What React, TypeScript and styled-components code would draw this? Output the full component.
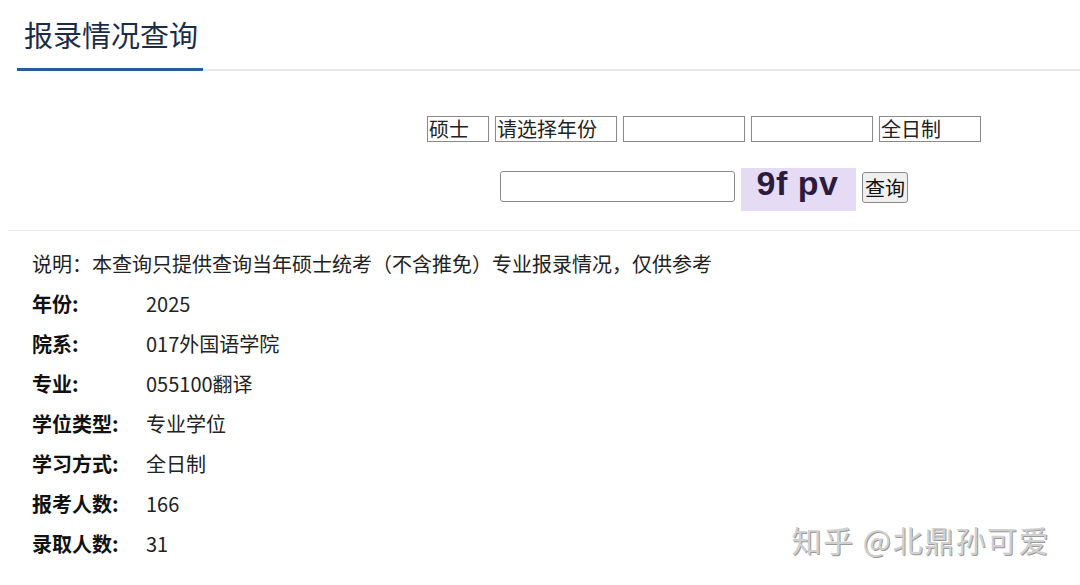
import { FC } from "react"
import styled, { createGlobalStyle } from "styled-components"

const GlobalStyle = createGlobalStyle`
  body {
    margin: 0;
    background: #fff;
    font-family: "Noto Sans CJK SC", "Noto Sans", sans-serif;
  }
`

const Page = styled.div`
  position: relative;
  width: 1080px;
  height: 585px;
  overflow: hidden;
`

const Header = styled.div`
  padding: 14px 0 0 17px;
`

const Title = styled.h1`
  margin: 0 0 14px 7px;
  font-size: 29px;
  line-height: 40px;
  font-weight: 400;
  color: #1c2c48;
`

const TabLine = styled.div`
  display: flex;
  align-items: flex-end;
`

const ActiveTab = styled.div`
  width: 186px;
  height: 3px;
  background: #2b5b9f;
`

const TabRest = styled.div`
  flex: 1;
  height: 2px;
  background: #e8e8e8;
`

const Form = styled.div`
  margin: 45px 0 0 328px;
  display: flex;
  flex-direction: column;
  gap: 26px;
`

const Row = styled.div`
  display: flex;
  justify-content: center;
  align-items: flex-start;
  gap: 6px;
`

const Select = styled.div<{ $w: number }>`
  box-sizing: border-box;
  display: flex;
  align-items: center;
  width: ${(p) => p.$w}px;
  height: 26px;
  border: 1px solid #8a8a8a;
  padding: 0 1px;
  font-size: 20px;
  line-height: 20px;
  color: #222;
  background: #fff;
  white-space: nowrap;
`

const CodeInput = styled.input`
  box-sizing: border-box;
  width: 235px;
  height: 31px;
  margin: 3px 0 0 0;
  border: 1px solid #8a8a8a;
  border-radius: 3px;
  outline: none;
`

const Captcha = styled.div`
  width: 115px;
  height: 43px;
  background: #e6dbf5;
  color: #2b1c3f;
  font-family: "Liberation Sans", Arial, sans-serif;
  font-weight: 700;
  font-size: 34px;
  line-height: 30px;
  text-align: center;
  letter-spacing: 0.5px;
  text-indent: -2px;
`

const QueryButton = styled.button`
  box-sizing: border-box;
  height: 31px;
  margin-top: 4px;
  padding: 0 2px;
  border: 1px solid #8a8a8a;
  border-radius: 3px;
  background: #efefef;
  font-family: "Noto Sans CJK SC", sans-serif;
  font-size: 20px;
  line-height: 27px;
  color: #111;
`

const Divider = styled.div`
  margin: 19px 0 0 8px;
  height: 1px;
  background: #ececec;
`

const Info = styled.div`
  padding: 13px 0 0 32px;
  font-size: 20px;
  color: #222;
`

const Note = styled.div`
  line-height: 40px;
`

const InfoRow = styled.div`
  display: flex;
  line-height: 40px;
`

const Label = styled.span`
  width: 114px;
  font-weight: 700;
  color: #111;
`

const Watermark = styled.div`
  position: absolute;
  right: 30px;
  bottom: 24px;
  font-size: 30px;
  color: #d0d0d0;
  letter-spacing: 1.5px;
  text-shadow: 1px 1px 0 #9a9a9a;
`

const rows: [string, string][] = [
  ["年份:", "2025"],
  ["院系:", "017外国语学院"],
  ["专业:", "055100翻译"],
  ["学位类型:", "专业学位"],
  ["学习方式:", "全日制"],
  ["报考人数:", "166"],
  ["录取人数:", "31"],
]

const App: FC = () => {
  return (
    <Page>
      <GlobalStyle />
      <Header>
        <Title>报录情况查询</Title>
        <TabLine>
          <ActiveTab />
          <TabRest />
        </TabLine>
      </Header>

      <Form>
        <Row>
          <Select $w={62}>硕士</Select>
          <Select $w={122}>请选择年份</Select>
          <Select $w={122}></Select>
          <Select $w={122}></Select>
          <Select $w={102}>全日制</Select>
        </Row>
        <Row>
          <CodeInput />
          <Captcha>9f pv</Captcha>
          <QueryButton>查询</QueryButton>
        </Row>
      </Form>

      <Divider />

      <Info>
        <Note>说明：本查询只提供查询当年硕士统考（不含推免）专业报录情况，仅供参考</Note>
        {rows.map(([label, value]) => (
          <InfoRow key={label}>
            <Label>{label}</Label>
            <span>{value}</span>
          </InfoRow>
        ))}
      </Info>

      <Watermark>知乎 @北鼎孙可爱</Watermark>
    </Page>
  )
}

export default App
